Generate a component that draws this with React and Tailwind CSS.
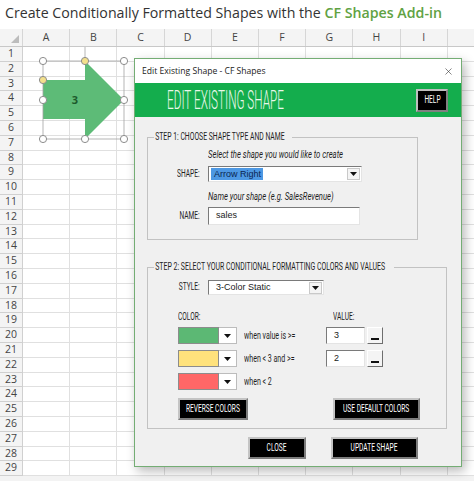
import { X } from "lucide-react"

const cols = ["A", "B", "C", "D", "E", "F", "G", "H", "I"]
const rows = Array.from({ length: 29 }, (_, i) => i + 1)

const cond = { fontFamily: "Roboto, 'Liberation Sans', sans-serif" }
const plain = { fontFamily: "'Liberation Sans', Arial, sans-serif" }

function Cond({ children, className = "" }) {
  return <span className={"inline-block whitespace-nowrap " + className}>{children}</span>
}

function Arrow() {
  return (
    <svg width="7" height="4" viewBox="0 0 7 4">
      <polygon points="0,0 7,0 3.5,4" fill="#111" />
    </svg>
  )
}

function Select({ width, children }) {
  return (
    <div
      className={"h-full bg-white flex items-center border-t border-l border-t-[#7a7a7a] border-l-[#7a7a7a] border-r border-b border-r-[#e4e4e4] border-b-[#e4e4e4] " + width}
    >
      <div className="flex-1 h-full flex items-center pl-[2px] text-[9px] text-[#1a1a1a]" style={plain}>
        {children}
      </div>
      <div className="w-[13px] h-[12px] mr-[1px] flex items-center justify-center bg-[#f4f4f4] border border-[#c9c9c9]">
        <Arrow />
      </div>
    </div>
  )
}

function Field({ width, children }) {
  return (
    <div
      className={"h-full bg-white flex items-center pl-[7px] text-[9px] text-[#1a1a1a] border-t border-l border-t-[#7a7a7a] border-l-[#7a7a7a] border-r border-b border-r-[#e4e4e4] border-b-[#e4e4e4] " + width}
      style={plain}
    >
      {children}
    </div>
  )
}

function BlackButton({ width, children }) {
  return (
    <div
      className={"h-[22px] bg-black flex items-center justify-center border-2 border-t-[#c4c4c4] border-l-[#c4c4c4] border-r-[#7d7d7d] border-b-[#7d7d7d] text-white text-[11px] " + width}
      style={cond}
    >
      <Cond className="scale-x-[0.6]">{children}</Cond>
    </div>
  )
}

function Swatch({ color }) {
  return (
    <div className="flex h-[17px] w-[59px]">
      <div className={"w-[41px] h-full border border-[#8c8c8c] " + color} />
      <div className="w-[18px] h-full bg-white border-t border-b border-r border-[#bcbcbc] flex items-center justify-center">
        <Arrow />
      </div>
    </div>
  )
}

function DotsButton() {
  return (
    <div className="w-[16px] h-full bg-[#f4f4f4] border border-t-white border-l-white border-r-[#6e6e6e] border-b-[#6e6e6e] flex items-end justify-center pb-[3px]">
      <div className="w-[8px] h-[2px] bg-[#111]" />
    </div>
  )
}

function ColorRow({ color, label, value }) {
  return (
    <div className="flex items-center h-[17px] pl-[30px]">
      <Swatch color={color} />
      <div className="w-[89px] pl-[7px] text-[10.5px] text-[#1f1f1f]" style={cond}>
        <Cond className="origin-left scale-x-[0.67]">{label}</Cond>
      </div>
      {value && (
        <div className="flex h-full gap-[2px]">
          <Field width="w-[39px]">{value}</Field>
          <DotsButton />
        </div>
      )}
    </div>
  )
}

function Label({ children }) {
  return (
    <div className="w-[52px] text-right text-[11px] text-[#1f1f1f]" style={cond}>
      <Cond className="origin-right scale-x-[0.6]">{children}</Cond>
    </div>
  )
}

function Dialog() {
  return (
    <div className="absolute left-[134px] top-[58px] w-[328px] h-[409px] flex flex-col bg-[#f0f0f0] border border-[#74ad74] shadow-[3px_4px_10px_rgba(0,0,0,0.28)]">
      <div className="h-[24px] bg-white flex items-center justify-between pl-[7px] pr-[7px]">
        <span className="text-[8.6px] text-[#222]" style={{ fontFamily: "'Open Sans', sans-serif" }}>
          Edit Existing Shape - CF Shapes
        </span>
        <X size={11} strokeWidth={1.3} className="text-[#333]" />
      </div>

      <div className="h-[34px] bg-[#14ad4d] flex items-center justify-between pl-[32px] pr-[13px]">
        <span className="text-[25px] font-light text-[#eaf7ea] leading-none" style={cond}>
          <Cond className="origin-left scale-x-[0.47]">EDIT EXISTING SHAPE</Cond>
        </span>
        <div
          className="w-[34px] h-[23px] bg-black flex items-center justify-center border-2 border-t-[#bfbfbf] border-l-[#bfbfbf] border-r-[#808080] border-b-[#808080] text-white text-[11px]"
          style={cond}
        >
          <Cond className="scale-x-[0.6]">HELP</Cond>
        </div>
      </div>

      <div className="flex-1 flex flex-col pl-[12px]">
        <fieldset className="mt-[14px] w-[271px] h-[109px] border border-[#c2c2c2]">
          <legend className="ml-[6px] w-[138px] h-[12px] leading-[12px] text-[11px] text-[#1f1f1f]" style={cond}>
            <Cond className="origin-left scale-x-[0.62] pl-[2px]">STEP 1: CHOOSE SHAPE TYPE AND NAME</Cond>
          </legend>
          <div className="mt-[6px] h-[12px] pl-[60px] text-[11px] italic text-[#1f1f1f] leading-[12px]" style={cond}>
            <Cond className="origin-left scale-x-[0.7]">Select the shape you would like to create</Cond>
          </div>
          <div className="mt-[5px] h-[16px] flex items-center gap-[8px]">
            <Label>SHAPE:</Label>
            <Select width="w-[154px]">
              <span className="bg-[#4d98e3] text-[#0b2550] h-[12px] leading-[12px] pl-[3px] pr-[2px]">Arrow Right</span>
            </Select>
          </div>
          <div className="mt-[9px] h-[12px] pl-[60px] text-[11px] italic text-[#1f1f1f] leading-[12px]" style={cond}>
            <Cond className="origin-left scale-x-[0.7]">Name your shape (e.g. SalesRevenue)</Cond>
          </div>
          <div className="mt-[4px] h-[18px] flex items-center gap-[8px]">
            <Label>NAME:</Label>
            <Field width="w-[152px]">sales</Field>
          </div>
        </fieldset>

        <fieldset className="mt-[21px] w-[300px] h-[168px] border border-[#c2c2c2]">
          <legend className="ml-[6px] w-[240px] h-[12px] leading-[12px] text-[11px] text-[#1f1f1f]" style={cond}>
            <Cond className="origin-left scale-x-[0.63] pl-[2px]">STEP 2: SELECT YOUR CONDITIONAL FORMATTING COLORS AND VALUES</Cond>
          </legend>
          <div className="mt-[7px] h-[15px] flex items-center gap-[8px]">
            <Label>STYLE:</Label>
            <Select width="w-[116px]">
              <span className="pl-[5px]">3-Color Static</span>
            </Select>
          </div>
          <div className="mt-[16px] h-[12px] flex pl-[30px] text-[11px] text-[#1f1f1f] leading-[12px]" style={cond}>
            <div className="w-[155px]">
              <Cond className="origin-left scale-x-[0.6]">COLOR:</Cond>
            </div>
            <Cond className="origin-left scale-x-[0.6]">VALUE:</Cond>
          </div>
          <div className="mt-[4px] flex flex-col gap-[6px]">
            <ColorRow color="bg-[#5cb874]" label="when value is >=" value="3" />
            <ColorRow color="bg-[#ffe27c]" label="when < 3 and >=" value="2" />
            <ColorRow color="bg-[#ff6767]" label="when < 2" />
          </div>
          <div className="mt-[8px] flex pl-[30px] gap-[85px]">
            <BlackButton width="w-[70px]">REVERSE COLORS</BlackButton>
            <BlackButton width="w-[87px]">USE DEFAULT COLORS</BlackButton>
          </div>
        </fieldset>

        <div className="mt-[8px] flex pl-[101px] gap-[25px]">
          <BlackButton width="w-[58px]">CLOSE</BlackButton>
          <BlackButton width="w-[87px]">UPDATE SHAPE</BlackButton>
        </div>
      </div>
    </div>
  )
}

function ShapeOverlay() {
  const handles = [
    [43, 61, false], [124, 61, false], [43, 100, false], [124, 100, false],
    [43, 139, false], [85, 139, false], [124, 139, false], [85, 61, true], [43, 80, true],
  ]
  return (
    <svg className="absolute left-0 top-0" width="474" height="481" viewBox="0 0 474 481">
      <polygon points="43,80 85,80 85,61 124,100 85,139 85,119 43,119" fill="#5dbb77" />
      <text x="75" y="104" textAnchor="middle" fontSize="11" fontWeight="bold" fill="#1d5a2c" fontFamily="'Open Sans', sans-serif">3</text>
      <rect x="43" y="61" width="81" height="78" fill="none" stroke="#a3a3a3" strokeWidth="0.8" />
      <line x1="85" y1="47" x2="85" y2="58" stroke="#a3a3a3" strokeWidth="0.8" />
      {handles.map(([x, y, yellow], i) => (
        <circle key={i} cx={x} cy={y} r="3.6" fill={yellow ? "#f3e08c" : "#ffffff"} stroke="#8d8d8d" strokeWidth="1" />
      ))}
    </svg>
  )
}

export default function App() {
  return (
    <div className="relative w-[474px] h-[481px] overflow-hidden bg-white flex flex-col">
      <div className="h-[29px] pl-[5px] pt-[2px] text-[14.2px] text-[#333] whitespace-nowrap" style={{ fontFamily: "'Open Sans', sans-serif" }}>
        Create Conditionally Formatted Shapes with the <span className="font-semibold text-[#5fa243]">CF Shapes Add-in</span>
      </div>

      <div className="flex h-[18px] bg-[#f4f4f4] border-b border-[#c8c8c8] text-[10.5px] text-[#444]" style={{ fontFamily: "'Open Sans', sans-serif" }}>
        <div className="w-[23px] shrink-0 border-r border-[#d6d6d6] flex items-end justify-end pr-[3px] pb-[3px]">
          <svg width="8" height="8" viewBox="0 0 8 8">
            <polygon points="8,0 8,8 0,8" fill="#bcbcbc" />
          </svg>
        </div>
        {cols.map((c) => (
          <div key={c} className="w-[47.2px] shrink-0 border-r border-[#d6d6d6] flex items-center justify-center">
            {c}
          </div>
        ))}
        <div className="flex-1" />
      </div>

      {rows.map((r) => (
        <div key={r} className="flex h-[14.8px] shrink-0">
          <div
            className="w-[23px] shrink-0 bg-[#f4f4f4] border-r border-b border-[#d0d0d0] flex items-center justify-center text-[10.5px] text-[#444]"
            style={{ fontFamily: "'Open Sans', sans-serif" }}
          >
            {r}
          </div>
          {cols.map((c) => (
            <div key={c} className="w-[47.2px] shrink-0 border-r border-b border-[#e0e0e0]" />
          ))}
          <div className="flex-1 border-b border-[#e0e0e0]" />
        </div>
      ))}
      <div className="flex-1 bg-[#f3f3f3]" />

      <ShapeOverlay />
      <Dialog />
    </div>
  )
}
